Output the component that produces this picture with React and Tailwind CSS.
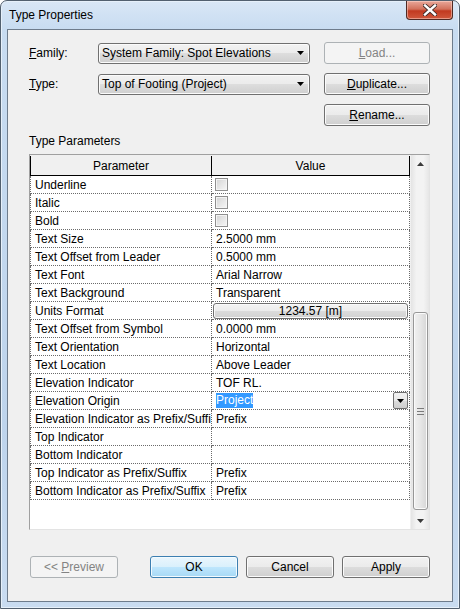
import React from 'react';

const btnBase =
  'flex items-center justify-center h-[22px] rounded-[3px] border text-[12px] leading-none';
const btnNormal =
  'border-[#707070] bg-[linear-gradient(#f2f2f2,#ebebeb_50%,#dddddd_50%,#cfcfcf)] shadow-[inset_0_0_0_1px_#fbfbfb] text-black';
const btnDefault =
  'border-[#3c7fb1] bg-[linear-gradient(#eaf6fd,#d9f0fc_50%,#bee6fd_50%,#a7d9f5)] shadow-[inset_0_0_0_1px_#f3fbff] text-black';
const btnDisabled = 'border-[#adb2b5] bg-[#f4f4f4] text-[#838383]';

const Button = ({ children, kind = 'normal', className = '' }) => {
  const look = kind === 'default' ? btnDefault : kind === 'disabled' ? btnDisabled : btnNormal;
  return <div className={`${btnBase} ${look} ${className}`}>{children}</div>;
};

const Arrow = ({ up = false, color = '#000' }) => (
  <svg width="7" height="4" viewBox="0 0 7 4">
    <path d={up ? 'M0 4 L3.5 0 L7 4 Z' : 'M0 0 L7 0 L3.5 4 Z'} fill={color} />
  </svg>
);

const Combo = ({ text }) => (
  <div className="flex items-center justify-between w-[212px] h-[21px] rounded-[3px] border border-[#707070] bg-[linear-gradient(#f2f2f2,#ebebeb_50%,#dddddd_50%,#cfcfcf)] shadow-[inset_0_0_0_1px_#fbfbfb] pl-[3px] pr-[5px]">
    <span>{text}</span>
    <Arrow />
  </div>
);

const Check = () => (
  <div className="w-[13px] h-[13px] ml-[3px] border border-[#8f8f8f] bg-[linear-gradient(135deg,#d4d4d4,#f7f7f7)] shadow-[inset_0_0_0_1px_#f4f4f4]" />
);

const rows = [
  ['Underline', { check: true }],
  ['Italic', { check: true }],
  ['Bold', { check: true }],
  ['Text Size', '2.5000 mm'],
  ['Text Offset from Leader', '0.5000 mm'],
  ['Text Font', 'Arial Narrow'],
  ['Text Background', 'Transparent'],
  ['Units Format', { button: '1234.57 [m]' }],
  ['Text Offset from Symbol', '0.0000 mm'],
  ['Text Orientation', 'Horizontal'],
  ['Text Location', 'Above Leader'],
  ['Elevation Indicator', 'TOF RL.'],
  ['Elevation Origin', { select: 'Project' }],
  ['Elevation Indicator as Prefix/Suffi', 'Prefix'],
  ['Top Indicator', ''],
  ['Bottom Indicator', ''],
  ['Top Indicator as Prefix/Suffix', 'Prefix'],
  ['Bottom Indicator as Prefix/Suffix', 'Prefix'],
];

const ValueCell = ({ value }) => {
  if (typeof value === 'string') {
    return <span className="pl-[4px]">{value}</span>;
  }
  if (value.check) return <Check />;
  if (value.button) {
    return (
      <div className="flex items-center justify-center w-full h-[16px] mx-[1px] rounded-[3px] border border-[#6f6f6f] bg-[linear-gradient(#f4f4f4,#ececec_50%,#dcdcdc_50%,#d2d2d2)] shadow-[inset_0_0_0_1px_#fafafa] leading-none">
        {value.button}
      </div>
    );
  }
  return (
    <div className="flex items-center justify-between w-full pl-[4px] pr-[1px]">
      <span className="bg-[#3399ff] text-white leading-[15px]">{value.select}</span>
      <div className="flex items-center justify-center w-[15px] h-[17px] border border-[#707070] rounded-[2px] bg-[linear-gradient(#f2f2f2,#ebebeb_50%,#dddddd_50%,#cfcfcf)]">
        <Arrow />
      </div>
    </div>
  );
};

const App = () => {
  return (
    <div className="w-[460px] h-[609px] bg-white font-['Liberation_Sans',Arial,sans-serif] text-[12px] text-black">
      <div className="flex flex-col w-[460px] h-[609px] rounded-t-[7px] border border-[#52606f] bg-[linear-gradient(#d9e7f6,#c8dcf1_28px,#bed4ec_70%,#c9dcf1)] shadow-[inset_0_0_0_1px_#e6f0fa] px-[6px] pb-[6px]">
        {/* title bar */}
        <div className="flex justify-between h-[28px] shrink-0">
          <div className="pt-[7px] pl-[2px] leading-[14px]">Type Properties</div>
          <div className="flex items-center justify-center w-[47px] h-[19px] rounded-b-[4px] border border-t-0 border-[#4f2a24] bg-[linear-gradient(#e9a89a,#d2715c_45%,#c23a20_55%,#d0583c)] shadow-[inset_0_0_0_1px_rgba(255,220,210,0.5)]">
            <svg width="14" height="12" viewBox="0 0 14 12">
              <path d="M2 1.5 L12 10.5 M12 1.5 L2 10.5" stroke="#3e2a28" strokeWidth="4.2" strokeLinecap="square" />
              <path d="M2 1.5 L12 10.5 M12 1.5 L2 10.5" stroke="#ffffff" strokeWidth="2.4" strokeLinecap="square" />
            </svg>
          </div>
        </div>

        {/* client area */}
        <div className="flex flex-col flex-1 border border-[#6e7c8c] bg-[#f0f0f0] pl-[21px] pr-[22px]">
          <div className="flex items-center h-[22px] mt-[12px]">
            <div className="w-[69px]">
              <span className="underline">F</span>amily:
            </div>
            <Combo text="System Family: Spot Elevations" />
            <Button kind="disabled" className="w-[106px] ml-[14px]">
              <span className="underline">L</span>oad...
            </Button>
          </div>
          <div className="flex items-center h-[22px] mt-[9px]">
            <div className="w-[69px]">
              <span className="underline">T</span>ype:
            </div>
            <Combo text="Top of Footing (Project)" />
            <Button className="w-[106px] ml-[14px]">
              <span className="underline">D</span>uplicate...
            </Button>
          </div>
          <div className="flex justify-end h-[22px] mt-[9px]">
            <Button className="w-[106px]">
              <span className="underline">R</span>ename...
            </Button>
          </div>

          <div className="mt-[8px] h-[14px] leading-[14px]">Type Parameters</div>

          {/* parameters table */}
          <div className="flex mt-[6px] h-[376px] w-[401px] border border-t-[#a0a0a0] border-l-[#a0a0a0] border-r-[#e3e3e3] border-b-[#e3e3e3] shadow-[inset_0_1px_0_#a0a0a0] bg-white">
            <div className="flex flex-col w-[380px]">
              <div className="flex h-[21px] shrink-0 bg-[#f0f0f0] pt-[1px]">
                <div className="flex items-center justify-center w-[182px] border-l border-r border-b border-black">
                  Parameter
                </div>
                <div className="flex items-center justify-center w-[198px] border-r border-b border-black">
                  Value
                </div>
              </div>
              {rows.map(([name, value]) => (
                <div key={name} className="flex h-[18px] shrink-0">
                  <div className="flex items-center w-[182px] pl-[4px] whitespace-nowrap overflow-hidden border-l border-r border-b border-dotted border-[#6a6a6a]">
                    {name}
                  </div>
                  <div className="flex items-center w-[198px] whitespace-nowrap overflow-hidden border-r border-b border-dotted border-[#6a6a6a]">
                    <ValueCell value={value} />
                  </div>
                </div>
              ))}
            </div>

            {/* scrollbar */}
            <div className="flex flex-col w-[19px] bg-[linear-gradient(90deg,#e4e4e4,#f3f3f3_30%,#f3f3f3_70%,#e6e6e6)] border-l border-[#f0f0f0]">
              <div className="flex items-center justify-center h-[17px] shrink-0">
                <Arrow up color="#3a3a3a" />
              </div>
              <div className="flex flex-col flex-1 items-center">
                <div className="flex items-center justify-center w-[15px] h-[198px] mt-[140px] rounded-[3px] border border-[#979797] bg-[linear-gradient(90deg,#f1f1f1,#e6e6e6_50%,#d6d6d6)] shadow-[inset_0_0_0_1px_#fafafa]">
                  <div className="flex flex-col gap-[2px]">
                    <div className="w-[7px] h-[1px] bg-[#7a7a7a]" />
                    <div className="w-[7px] h-[1px] bg-[#7a7a7a]" />
                    <div className="w-[7px] h-[1px] bg-[#7a7a7a]" />
                  </div>
                </div>
              </div>
              <div className="flex items-center justify-center h-[17px] shrink-0">
                <Arrow color="#3a3a3a" />
              </div>
            </div>
          </div>

          {/* bottom buttons */}
          <div className="flex mt-[26px]">
            <Button kind="disabled" className="w-[88px] ml-[1px]">
              &lt;&lt;&nbsp;<span className="underline">P</span>review
            </Button>
            <Button kind="default" className="w-[88px] ml-[32px]">OK</Button>
            <Button className="w-[88px] ml-[8px]">Cancel</Button>
            <Button className="w-[88px] ml-[8px]">Apply</Button>
          </div>
        </div>
      </div>
    </div>
  );
};

export default App;
